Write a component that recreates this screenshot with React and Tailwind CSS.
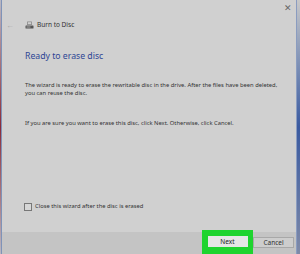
import React from "react";

const DiscIcon = () => (
  <svg width="9" height="8" viewBox="0 0 9 8" className="block">
    <rect x="2" y="0.5" width="5" height="3.5" rx="0.5" fill="#8a8a8a" />
    <rect x="2.8" y="1.2" width="3.4" height="2" fill="#cfcfcf" />
    <rect x="0.5" y="4.5" width="8" height="3" rx="0.5" fill="#555" />
    <rect x="1.5" y="5.6" width="4" height="0.8" fill="#bbb" />
  </svg>
);

const App = () => (
  <div
    className="flex w-[300px] h-[254px] bg-[#d0d0d0] overflow-hidden"
    style={{ fontFamily: '"Noto Sans", "Open Sans", sans-serif' }}
  >
    <div className="w-[1px] h-full bg-gradient-to-b from-[#b8b8c4] via-[#8a2a3a] to-[#b8b8c4]" />
    <div className="w-[1px] h-full bg-[#7f93b8]" />

    <div className="flex-1 flex flex-col">
      <div className="flex-1 flex flex-col">
        <div className="flex justify-end pt-[3px] pr-[4px] h-[14px]">
          <span className="text-[9px] leading-[9px] text-[#666]">✕</span>
        </div>

        <div className="flex items-center h-[16px] mt-[3px] pl-[4px]">
          <span className="text-[8px] text-[#a8a8a8] leading-none">←</span>
          <div className="ml-[11px]">
            <DiscIcon />
          </div>
          <span className="ml-[3px] text-[6.5px] text-[#333] leading-none">Burn to Disc</span>
        </div>

        <h1 className="mt-[17px] ml-[23px] text-[8.7px] leading-[12px] text-[#2e4594]">
          Ready to erase disc
        </h1>

        <p className="mt-[19px] ml-[23px] text-[5.8px] leading-[8px] text-[#333] whitespace-nowrap">
          The wizard is ready to erase the rewritable disc in the drive. After the files have been deleted,
          <br />
          you can reuse the disc.
        </p>

        <p className="mt-[22px] ml-[23px] text-[5.8px] leading-[8px] text-[#333] whitespace-nowrap">
          If you are sure you want to erase this disc, click Next. Otherwise, click Cancel.
        </p>

        <div className="mt-auto mb-[21px] ml-[22px] flex items-center">
          <div className="w-[8px] h-[8px] border border-[#777] bg-[#d6d6d6]" />
          <span className="ml-[3px] text-[5.8px] leading-none text-[#333]">
            Close this wizard after the disc is erased
          </span>
        </div>
      </div>

      <div className="h-[22px] bg-[#c4c4c4] flex justify-end items-end pr-[2px]">
        <div className="bg-[#1fd42f] w-[51px] h-[24px] flex items-center justify-center pb-[1px]">
          <div className="w-[40px] h-[11px] bg-[#e6e6e6] flex items-center justify-center text-[6.5px] text-[#222]">
            Next
          </div>
        </div>
        <div className="mb-[6px] w-[41px] h-[11px] border border-[#a8a8a8] bg-[#cdcdcd] flex items-center justify-center text-[6.5px] text-[#333]">
          Cancel
        </div>
      </div>
    </div>

    <div className="w-[1px] h-full bg-[#8a9cc0]" />
    <div className="w-[3px] h-full bg-gradient-to-b from-[#c8c8c8] via-[#3a5aa0] to-[#7f8aa8]" />
  </div>
);

export default App;
